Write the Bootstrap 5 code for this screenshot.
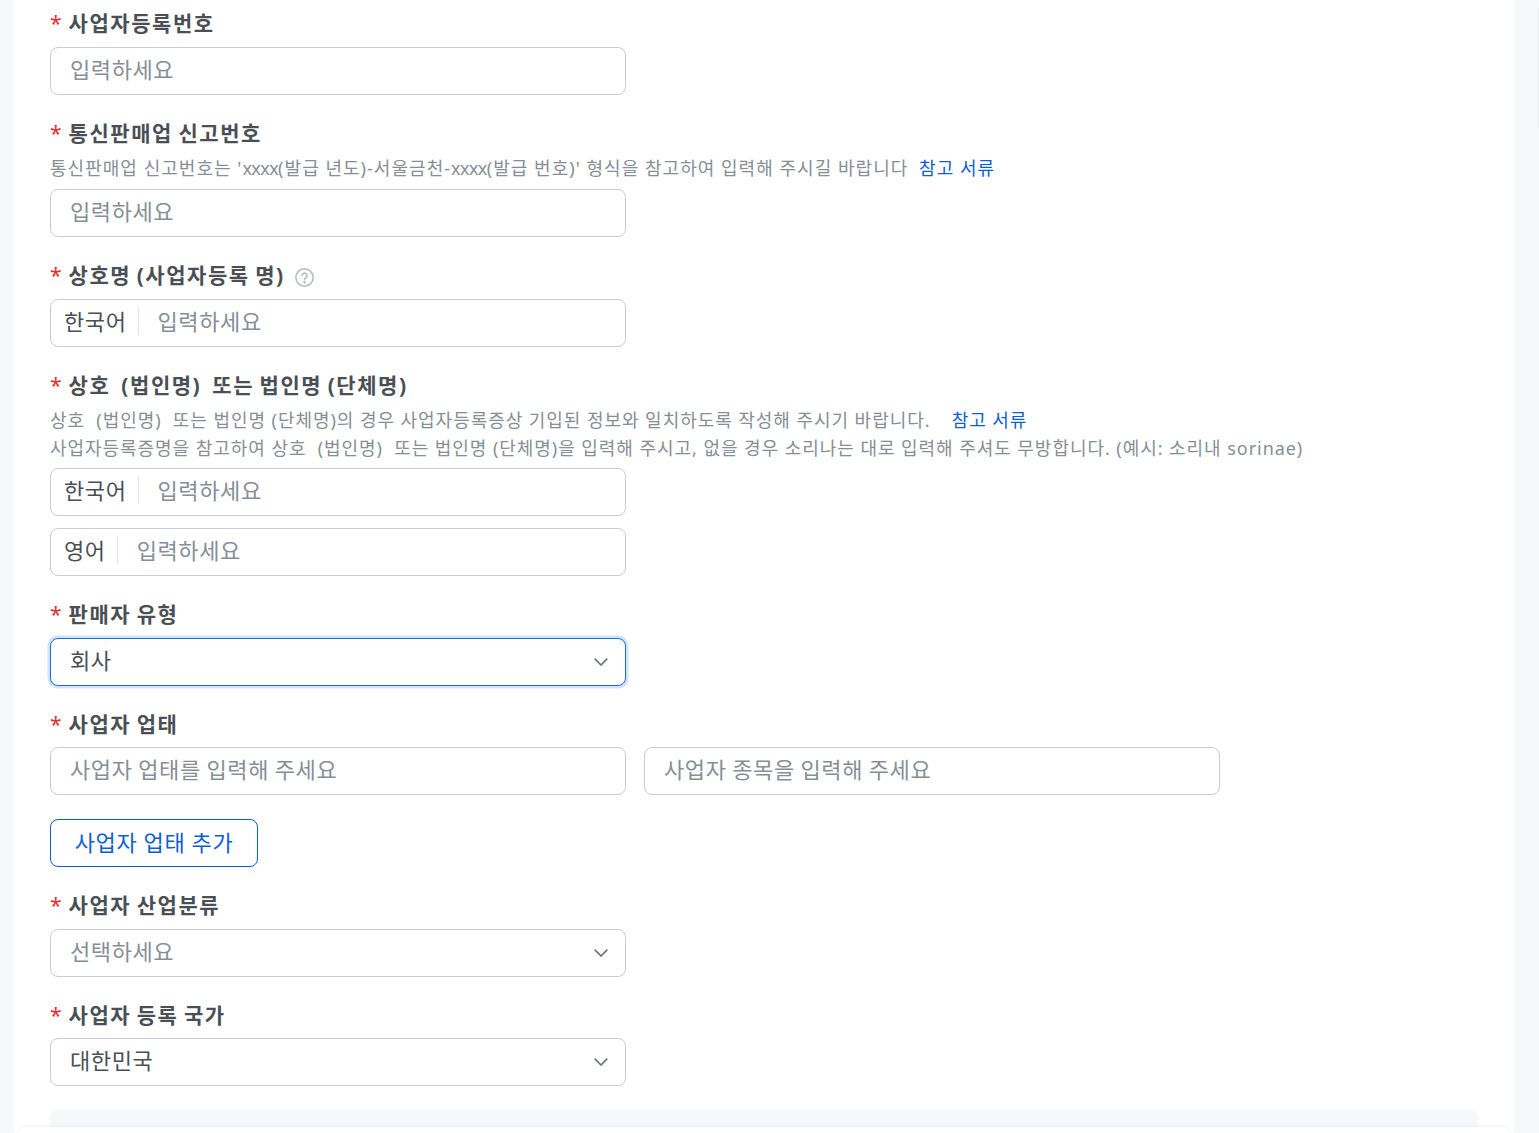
<!DOCTYPE html>
<html lang="ko">
<head>
<meta charset="utf-8">
<title>판매자 정보</title>
<link href="https://cdn.jsdelivr.net/npm/bootstrap@5.3.0/dist/css/bootstrap.min.css" rel="stylesheet">
<style>
html,body{height:100%;overflow:hidden;}
body{background:#f7f8fa;font-family:"Noto Sans","Noto Sans CJK KR",sans-serif;color:#4a4f55;}
.sheet{margin:0 25px 0 14px;background:#fff;padding:11.4px 36px 0;height:1133px;overflow:hidden;}
.fld{margin-bottom:26.3px;}
.fld:first-child{margin-bottom:26.5px;}
.fld-label{display:flex;align-items:center;font-size:21px;letter-spacing:1.55px;word-spacing:-1.5px;line-height:24px;font-weight:700;color:#4a4f55;margin-bottom:11.4px;white-space:pre;}
.req{color:#e03131;font-weight:400;margin-right:7px;letter-spacing:0;}
.fld-help{font-size:18px;letter-spacing:.95px;line-height:27.9px;color:#868e96;margin-top:-1.5px;margin-bottom:5.8px;white-space:nowrap;}
.help-wide{letter-spacing:1.03px;}
.fld-help a{color:#0b5ed7;text-decoration:none;margin-left:5px;}
.fld-help a.link-far{margin-left:10px;}
.tight-x{letter-spacing:-.6px;}
.box{width:576px;height:48px;border:1px solid #c9ccd1;border-radius:8px;font-size:22px;letter-spacing:.6px;word-spacing:-.6px;line-height:28px;color:#495057;background-color:#fff;padding:6px 19px 10px;}
.box::placeholder{color:#868e96;opacity:1;}
.box:focus{box-shadow:none;}
select.box{padding-right:40px;background-position:right 17px center;background-size:14px 8px;background-image:url("data:image/svg+xml,%3csvg xmlns='http://www.w3.org/2000/svg' viewBox='0 0 14 8'%3e%3cpath fill='none' stroke='%236c757d' stroke-width='1.7' d='M.7.7 7 7l6.3-6.3'/%3e%3c/svg%3e");}
.sel-muted{color:#868e96;}
.sel-on{border-color:#1c6dd0;box-shadow:0 0 0 2.5px #cfe2ff;}
.pre-box{padding:0 0 4px;}
.pre-stack{margin-bottom:11.6px;}
.pre-tag{padding:0 11px 0 13px;line-height:28px;border-right:1px solid #dfe2e6;color:#495057;white-space:nowrap;}
.pre-box input{border:0;outline:0;flex:1;min-width:0;padding:0 19px;font:inherit;letter-spacing:inherit;color:#495057;background:transparent;}
.pre-box input::placeholder{color:#868e96;}
.gap-18{gap:18px;}
.add-btn{width:208px;height:48px;border:1px solid #0b5ed7;border-radius:8px;color:#0b5ed7;background:#fff;font-size:22px;letter-spacing:.6px;line-height:28px;padding:0 0 2px;margin-top:23.6px;}
.tip{margin-left:10px;margin-top:5px;flex:none;}
.gray-block{height:40px;background:#f7f8fa;border-radius:8px 8px 0 0;margin-top:-3px;}
.foot-bar{position:fixed;left:14px;width:1500px;top:1127px;height:20px;background:#fff;border-radius:14px 14px 0 0;box-shadow:0 -1px 3px rgba(0,0,0,.05);}
.thumb{position:fixed;right:0;top:8px;width:2px;height:120px;background:#f0f1f3;}
</style>
</head>
<body>
<div class="sheet">
<form>
  <div class="fld">
    <label class="fld-label"><span class="req">*</span>사업자등록번호</label>
    <input class="form-control box" placeholder="입력하세요">
  </div>
  <div class="fld">
    <label class="fld-label"><span class="req">*</span>통신판매업 신고번호</label>
    <div class="fld-help help-wide">통신판매업 신고번호는 '<span class="tight-x">xxxx</span>(발급 년도)-서울금천-<span class="tight-x">xxxx</span>(발급 번호)' 형식을 참고하여 입력해 주시길 바랍니다 <a href="#">참고 서류</a></div>
    <input class="form-control box" placeholder="입력하세요">
  </div>
  <div class="fld">
    <label class="fld-label"><span class="req">*</span>상호명 (사업자등록 명)<svg class="tip" width="19" height="19" viewBox="0 0 18 18" fill="none" stroke="#b4b7bb" stroke-width="1.4"><circle cx="9" cy="9" r="8.2"/><path d="M6.6 7.2a2.4 2.4 0 1 1 3.6 2.1c-.8.5-1.2 1-1.2 1.9" stroke-linecap="round"/><circle cx="9" cy="13.4" r=".5" fill="#b4b7bb"/></svg></label>
    <div class="box pre-box d-flex align-items-center"><span class="pre-tag">한국어</span><input placeholder="입력하세요"></div>
  </div>
  <div class="fld">
    <label class="fld-label"><span class="req">*</span>상호&nbsp; (법인명)&nbsp; 또는 법인명 (단체명)</label>
    <div class="fld-help">상호&nbsp; (법인명)&nbsp; 또는 법인명 (단체명)의 경우 사업자등록증상 기입된 정보와 일치하도록 작성해 주시기 바랍니다.&nbsp; <a href="#" class="link-far">참고 서류</a><br>사업자등록증명을 참고하여 상호&nbsp; (법인명)&nbsp; 또는 법인명 (단체명)을 입력해 주시고, 없을 경우 소리나는 대로 입력해 주셔도 무방합니다. (예시: 소리내 sorinae)</div>
    <div class="box pre-box pre-stack d-flex align-items-center"><span class="pre-tag">한국어</span><input placeholder="입력하세요"></div>
    <div class="box pre-box d-flex align-items-center"><span class="pre-tag">영어</span><input placeholder="입력하세요"></div>
  </div>
  <div class="fld">
    <label class="fld-label"><span class="req">*</span>판매자 유형</label>
    <select class="form-select box sel-on"><option>회사</option></select>
  </div>
  <div class="fld">
    <label class="fld-label"><span class="req">*</span>사업자 업태</label>
    <div class="d-flex gap-18">
      <input class="form-control box" placeholder="사업자 업태를 입력해 주세요">
      <input class="form-control box" placeholder="사업자 종목을 입력해 주세요">
    </div>
    <button type="button" class="btn add-btn">사업자 업태 추가</button>
  </div>
  <div class="fld">
    <label class="fld-label"><span class="req">*</span>사업자 산업분류</label>
    <select class="form-select box sel-muted"><option>선택하세요</option></select>
  </div>
  <div class="fld">
    <label class="fld-label"><span class="req">*</span>사업자 등록 국가</label>
    <select class="form-select box"><option>대한민국</option></select>
  </div>
</form>
<div class="gray-block"></div>
</div>
<div class="foot-bar"></div>
<div class="thumb"></div>
<script src="https://cdn.jsdelivr.net/npm/bootstrap@5.3.0/dist/js/bootstrap.bundle.min.js"></script>
</body>
</html>
